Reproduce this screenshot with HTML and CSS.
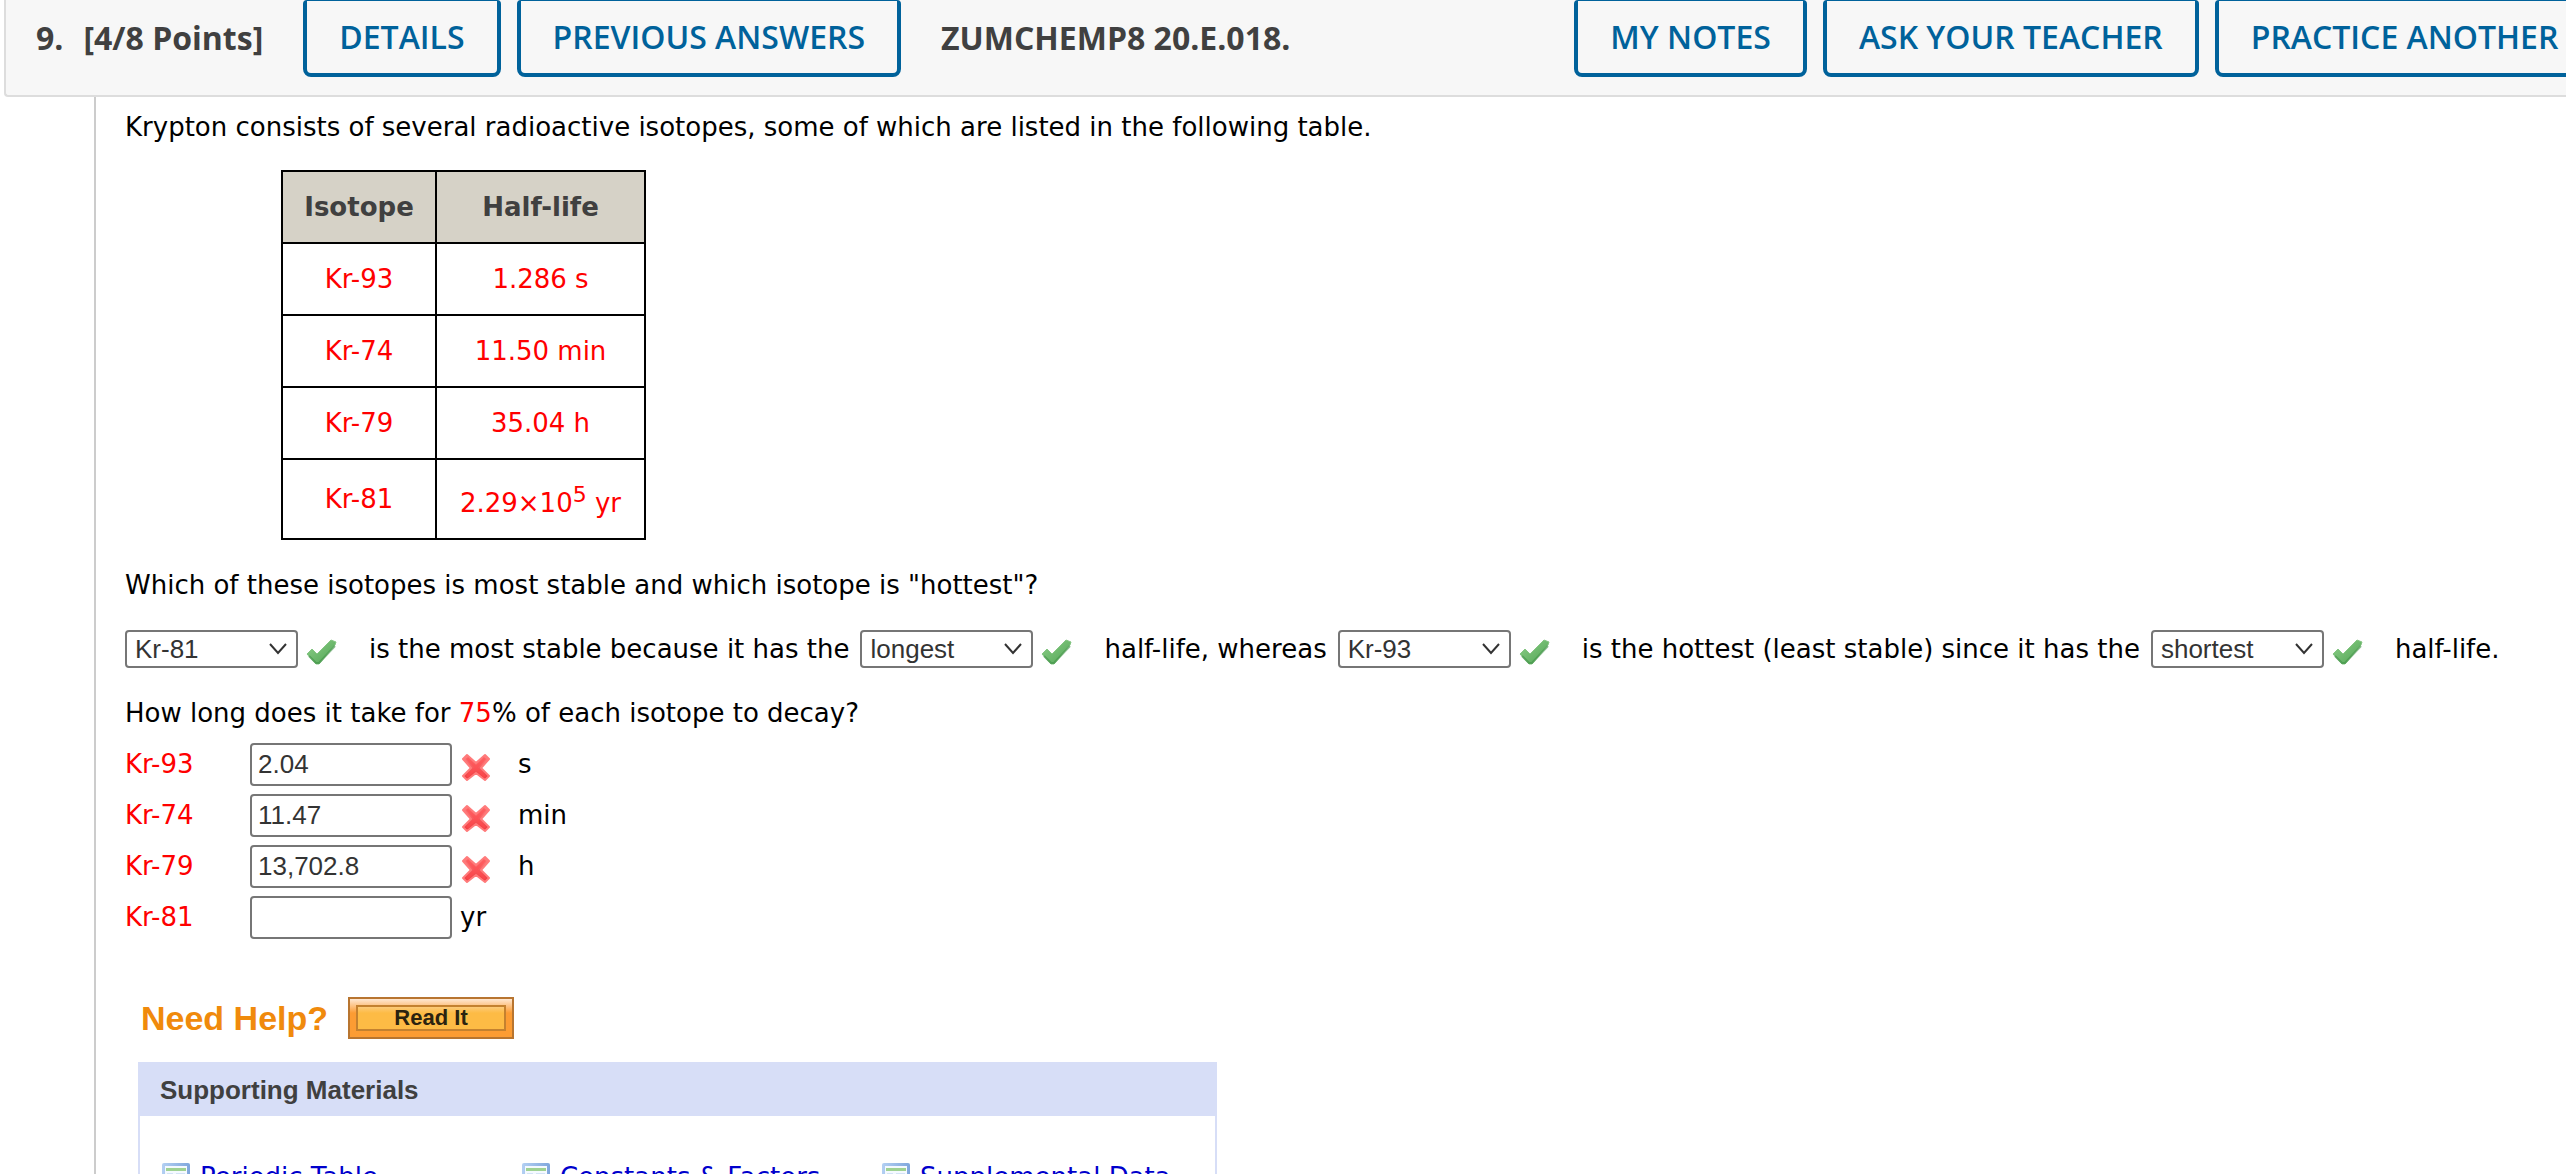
FILE: index.html
```html
<!doctype html>
<html lang="en">
<head>
<meta charset="utf-8">
<meta name="viewport" content="width=device-width, initial-scale=1">
<title>ZUMCHEMP8 20.E.018.</title>
<link rel="stylesheet" href="styles.css">
</head>
<body>

	<!-- shared icons -->
	<svg class="defs" aria-hidden="true">
		<defs>
			<linearGradient id="gradGreen" x1="0" y1="0" x2="1" y2="1">
				<stop offset="0" stop-color="#8fd08a" />
				<stop offset="1" stop-color="#4ea352" />
			</linearGradient>
			<linearGradient id="gradRed" x1="0" y1="0" x2="0" y2="1">
				<stop offset="0" stop-color="#ff8585" />
				<stop offset="1" stop-color="#ee3338" />
			</linearGradient>
			<linearGradient id="gradBlue" x1="0" y1="0" x2="1" y2="0">
				<stop offset="0" stop-color="#b3d0f3" />
				<stop offset="1" stop-color="#7fa6dc" />
			</linearGradient>
		</defs>
		<symbol id="check" viewBox="0 0 32 32">
			<path d="M1 18 L6 13 L11 18 L25 4 L30 6 L29 9 L13 28 L10 28 Z" fill="url(#gradGreen)" stroke="#84c582" stroke-width="1" stroke-linejoin="round" />
			<path d="M29 10 L13 27 L10 27 L3 20" fill="none" stroke="#3f9146" stroke-width="2" opacity=".6" />
		</symbol>
		<symbol id="cross" viewBox="0 0 32 32">
			<path d="M7 4 L16 12 L25 4 L29 8 L21 17 L29 25 L25 29 L16 22 L7 29 L3 25 L11 17 L3 8 Z" fill="url(#gradRed)" stroke="#ff7b7b" stroke-width="2" stroke-linejoin="round" />
			<path d="M7 7 L25 26 M25 7 L7 26" fill="none" stroke="#ff4c50" stroke-width="3" opacity=".6" />
		</symbol>
		<symbol id="sheet" viewBox="0 0 28 28">
			<rect x="0" y="0" width="28" height="28" rx="2" fill="url(#gradBlue)" />
			<rect x="3" y="3" width="22" height="22" fill="#f4f9ff" />
			<rect x="4" y="5" width="20" height="3" fill="#9fd292" />
			<path d="M5 12 H11 M14 12 H23 M5 17 H11 M14 17 H23 M5 22 H11 M14 22 H23" stroke="#b4cdf0" stroke-width="3" />
		</symbol>
	</svg>

	<header class="question-bar">
		<h2 class="points"><span>9.</span> <span>[4/8 Points]</span></h2>
		<div class="buttons">
			<button type="button">DETAILS</button>
			<button type="button">PREVIOUS ANSWERS</button>
		</div>
		<h2 class="code">ZUMCHEMP8 20.E.018.</h2>
		<div class="buttons">
			<button type="button">MY NOTES</button>
			<button type="button">ASK YOUR TEACHER</button>
			<button type="button">PRACTICE ANOTHER</button>
		</div>
	</header>

	<main class="question">

		<p class="intro">Krypton consists of several radioactive isotopes, some of which are listed in the following table.</p>

		<table class="isotopes">
			<thead>
				<tr><th class="name">Isotope</th><th class="life">Half-life</th></tr>
			</thead>
			<tbody>
				<tr><td>Kr-93</td><td>1.286 s</td></tr>
				<tr><td>Kr-74</td><td>11.50 min</td></tr>
				<tr><td>Kr-79</td><td>35.04 h</td></tr>
				<tr><td>Kr-81</td><td>2.29×10<sup>5</sup> yr</td></tr>
			</tbody>
		</table>

		<p>Which of these isotopes is most stable and which isotope is "hottest"?</p>

		<div class="sentence">
			<span class="answer">
				<select aria-label="most stable isotope"><option>Kr-81</option><option>Kr-93</option></select>
				<svg class="mark" role="img" aria-label="correct"><use href="#check" /></svg>
			</span>
			<span>is the most stable because it has the</span>
			<span class="answer">
				<select aria-label="half-life of the most stable"><option>longest</option><option>shortest</option></select>
				<svg class="mark" role="img" aria-label="correct"><use href="#check" /></svg>
			</span>
			<span>half-life, whereas</span>
			<span class="answer">
				<select aria-label="hottest isotope"><option>Kr-93</option><option>Kr-81</option></select>
				<svg class="mark" role="img" aria-label="correct"><use href="#check" /></svg>
			</span>
			<span>is the hottest (least stable) since it has the</span>
			<span class="answer">
				<select aria-label="half-life of the hottest"><option>shortest</option><option>longest</option></select>
				<svg class="mark" role="img" aria-label="correct"><use href="#check" /></svg>
			</span>
			<span>half-life.</span>
		</div>

		<p>How long does it take for <span class="value">75</span>% of each isotope to decay?</p>

		<div class="decay">
			<div class="row">
				<label for="kr93">Kr-93</label>
				<input type="text" id="kr93" value="2.04">
				<svg class="mark" role="img" aria-label="incorrect"><use href="#cross" /></svg>
				<span>s</span>
			</div>
			<div class="row">
				<label for="kr74">Kr-74</label>
				<input type="text" id="kr74" value="11.47">
				<svg class="mark" role="img" aria-label="incorrect"><use href="#cross" /></svg>
				<span>min</span>
			</div>
			<div class="row">
				<label for="kr79">Kr-79</label>
				<input type="text" id="kr79" value="13,702.8">
				<svg class="mark" role="img" aria-label="incorrect"><use href="#cross" /></svg>
				<span>h</span>
			</div>
			<div class="row">
				<label for="kr81">Kr-81</label>
				<input type="text" id="kr81">
				<span>yr</span>
			</div>
		</div>

		<div class="help">
			<strong>Need Help?</strong>
			<button type="button">Read It</button>
		</div>

		<section class="materials">
			<h3>Supporting Materials</h3>
			<div class="links">
				<a href="#periodic"><svg><use href="#sheet" /></svg>Periodic Table</a>
				<a href="#constants"><svg><use href="#sheet" /></svg>Constants &amp; Factors</a>
				<a href="#supplemental"><svg><use href="#sheet" /></svg>Supplemental Data</a>
			</div>
		</section>

	</main>

</body>
</html>
```
FILE: styles.css
```css
* { box-sizing: border-box; }

body { background: #fff; color: #000; font: 26px/30px "DejaVu Sans", Verdana, sans-serif; height: 100vh; margin: 0; overflow: hidden; }
h2, h3, p { margin: 0; }
button, input, select { font-family: "Liberation Sans", Arial, sans-serif; }

.defs { display: block; height: 0; width: 0; }

/* question bar */
.question-bar { background: #f7f7f7; border: 2px solid #ddd; border-radius: 0 0 0 4px; border-width: 0 0 2px 2px; display: flex; margin-left: 4px; padding: 0 0 18px 30px; white-space: nowrap; }
.question-bar h2 { color: #404040; flex: none; font: bold 32px/75px "Open Sans", sans-serif; }
.points { display: flex; gap: 20px; margin-right: 40px; }
.code { margin: 0 284px 0 40px; }
.buttons { display: flex; flex: none; gap: 16px; }
.buttons button { background: #f7f7f7; border: 4px solid #00629b; border-radius: 8px; border-top-width: 1px; border-top-left-radius: 4px; border-top-right-radius: 4px; color: #00629b; cursor: pointer; font: 600 32px/72px "Open Sans", sans-serif; padding: 0 32px; }

/* question body */
.question { border-left: 2px solid #ccc; margin-left: 94px; min-height: 100vh; padding: 15px 29px; }
.isotopes { border-collapse: collapse; color: #f00; margin: 28px 0 30px 156px; text-align: center; }
.isotopes th, .isotopes td { border: 2px solid #000; padding: 20px 0; }
.isotopes th { background: #d6d2c7; color: #404040; }
.isotopes .name { width: 154px; }
.isotopes .life { width: 209px; }
.isotopes sup { font-size: 22px; }
.value, .decay label { color: #f00; }

.sentence { align-items: center; display: flex; flex-wrap: wrap; gap: 11px; margin: 30px 0; }
.answer { align-items: center; display: flex; gap: 8px; margin-right: 20px; }
.mark { flex: none; height: 32px; margin-top: 6px; width: 32px; }
select { appearance: none; background: #fff url("data:image/svg+xml,%3Csvg xmlns='http://www.w3.org/2000/svg' width='18' height='12'%3E%3Cpath d='M1 1 L9 10 L17 1' fill='none' stroke='%23333' stroke-width='2'/%3E%3C/svg%3E") no-repeat right 9px center; border: 2px solid #767676; border-radius: 4px; color: #333; font-size: 26px; height: 38px; padding: 0 8px; width: 173px; }

.decay { display: grid; gap: 8px; margin-top: 15px; }
.row { align-items: center; display: flex; gap: 8px; }
.row label { width: 117px; }
.row .mark { margin-right: 18px; }
.row input { border: 2px solid #767676; border-radius: 4px; color: #333; font-size: 26px; height: 43px; padding: 0 6px; width: 202px; }

.help { align-items: center; display: flex; gap: 20px; margin: 58px 0 23px 16px; }
.help strong { color: #f08a0c; font: bold 34px/40px "Liberation Sans", Arial, sans-serif; }
.help button { background: linear-gradient(#fdd08a, #fdbb45 8px) 6px 6px / 150px 26px no-repeat, linear-gradient(#ffe8d2, #fc9c33 14px); border: 2px solid #b87530; color: #2b2310; cursor: pointer; font-size: 22px; font-weight: bold; height: 42px; outline: 2px solid #c4812f; outline-offset: -10px; width: 166px; }

.materials { border: 2px solid #d7def7; margin-left: 13px; max-width: 1079px; }
.materials h3 { background: #d7def7; color: #404040; font: bold 26px/52px "Liberation Sans", Arial, sans-serif; padding-left: 20px; }
.links { display: grid; grid-template-columns: repeat(3, 360px); padding: 46px 22px; }
.links a { align-items: center; color: #00c; display: flex; gap: 10px; text-decoration: none; white-space: nowrap; }
.links svg { height: 28px; width: 28px; }
```
